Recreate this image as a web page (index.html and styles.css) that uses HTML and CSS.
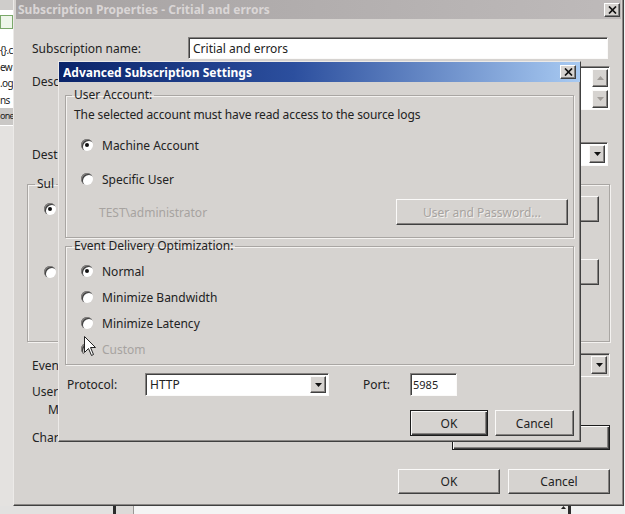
FILE: index.html
```html
<!DOCTYPE html>
<html lang="en">

<head>
    <meta charset="UTF-8">
    <title>Advanced Subscription Settings</title>
    <link rel="stylesheet" href="styles.css">
</head>

<body>
    <div class="desk">

        <!-- window peeking out on the left -->
        <div class="side">
            <div class="side-top"></div>
            <div class="side-list">
                <div class="side-icon"></div>
                <div class="side-row">{}.c</div>
                <div class="side-row">ew</div>
                <div class="side-row">.og</div>
                <div class="side-row">ns</div>
                <div class="side-row sel">one</div>
            </div>
        </div>

        <!-- Subscription Properties (behind) -->
        <div class="win back">
            <div class="cap cap-off">
                <span class="cap-t">Subscription Properties - Critial and errors</span>
                <span class="xbtn"><svg width="9" height="8" viewBox="0 0 9 8"><path d="M1 0.5 L8 7.5 M8 0.5 L1 7.5" stroke="#111" stroke-width="1.7"/></svg></span>
            </div>
            <div class="back-body">
                <div class="row row-name">
                    <span class="lbl">Subscription name:</span>
                    <div class="edit name-edit">Critial and errors</div>
                </div>
                <div class="row row-desc">
                    <span class="lbl">Desc</span>
                    <div class="edit memo">
                        <div class="vs">
                            <span class="sbtn"><svg width="7" height="4" viewBox="0 0 7 4"><path d="M3.5 0 L7 4 L0 4 Z" fill="#a09c98"/></svg></span>
                            <span class="sbtn"><svg width="7" height="4" viewBox="0 0 7 4"><path d="M0 0 L7 0 L3.5 4 Z" fill="#a09c98"/></svg></span>
                        </div>
                    </div>
                </div>
                <div class="row row-dest">
                    <span class="lbl">Dest</span>
                    <div class="edit combo dest-combo">
                        <span class="cv"></span>
                        <span class="drop"><svg width="7" height="4" viewBox="0 0 7 4"><path d="M0 0 L7 0 L3.5 4 Z" fill="#111"/></svg></span>
                    </div>
                </div>
                <fieldset class="grp sub-grp">
                    <legend>Sul</legend>
                    <div class="sub-row">
                        <span class="radio on"></span>
                        <span class="opt-t"></span>
                        <span class="btn sub-btn"></span>
                    </div>
                    <div class="sub-row second">
                        <span class="radio"></span>
                        <span class="opt-t"></span>
                        <span class="btn sub-btn"></span>
                    </div>
                </fieldset>
                <div class="row row-even">
                    <span class="lbl">Even</span>
                    <div class="edit combo off-combo">
                        <span class="cv"></span>
                        <span class="drop"><svg width="7" height="4" viewBox="0 0 7 4"><path d="M0 0 L7 0 L3.5 4 Z" fill="#111"/></svg></span>
                    </div>
                </div>
                <div class="line user-line">User</div>
                <div class="line acct-line">M</div>
                <div class="row row-chg">
                    <span>Char</span>
                    <span class="btn def chg-btn"></span>
                </div>
                <div class="foot back-foot">
                    <span class="btn">OK</span>
                    <span class="btn">Cancel</span>
                </div>
            </div>
        </div>

        <!-- Advanced Subscription Settings (front) -->
        <div class="win front">
            <div class="cap cap-on">
                <span class="cap-t">Advanced Subscription Settings</span>
                <span class="xbtn"><svg width="9" height="8" viewBox="0 0 9 8"><path d="M1 0.5 L8 7.5 M8 0.5 L1 7.5" stroke="#111" stroke-width="1.7"/></svg></span>
            </div>
            <div class="front-body">
                <fieldset class="grp acct">
                    <legend>User Account:</legend>
                    <div class="note">The selected account must have read access to the source logs</div>
                    <div class="opt first"><span class="radio on"></span>Machine Account</div>
                    <div class="opt spec"><span class="radio"></span>Specific User</div>
                    <div class="cred">
                        <span class="dim">TEST\administrator</span>
                        <span class="btn dis cred-btn">User and Password...</span>
                    </div>
                </fieldset>
                <fieldset class="grp deliv">
                    <legend>Event Delivery Optimization:</legend>
                    <div class="opt"><span class="radio on"></span>Normal</div>
                    <div class="opt"><span class="radio"></span>Minimize Bandwidth</div>
                    <div class="opt"><span class="radio"></span>Minimize Latency</div>
                    <div class="opt dim"><span class="radio dis"></span>Custom</div>
                </fieldset>
                <div class="proto">
                    <span class="proto-l">Protocol:</span>
                    <div class="edit combo proto-combo">
                        <span class="cv">HTTP</span>
                        <span class="drop"><svg width="7" height="4" viewBox="0 0 7 4"><path d="M0 0 L7 0 L3.5 4 Z" fill="#111"/></svg></span>
                    </div>
                    <span class="port-l">Port:</span>
                    <div class="edit port">5985</div>
                </div>
                <div class="foot front-foot">
                    <span class="btn def ok">OK</span>
                    <span class="btn cancel">Cancel</span>
                </div>
            </div>
        </div>

        <!-- mouse pointer -->
        <svg class="cursor" width="13" height="21" viewBox="0 0 13 21">
            <path d="M0.5 0.5 L0.5 16.5 L4.5 12.5 L7.5 19.5 L9.5 18.5 L6.5 11.5 L11.5 11.5 Z" fill="#fff" stroke="#222" stroke-width="1"/>
        </svg>

        <!-- strip below the windows -->
        <div class="strip">
            <span class="strip-l"></span>
            <span class="strip-bar"></span>
            <span class="strip-box"></span>
            <span class="strip-mid"></span>
            <span class="strip-box2"><svg width="5" height="3" viewBox="0 0 5 3"><path d="M0 3 L5 3 L2.5 0 Z" fill="#222"/></svg></span>
            <span class="strip-bar"></span>
        </div>
    </div>
</body>

</html>
```

FILE: styles.css
```css
body {
    margin: 0;
    background-color: #f2f2f2;
    font-family: "Noto Sans", "DejaVu Sans", sans-serif;
    font-size: 12px;
    color: #222;
}

.desk {
    position: relative;
    width: 625px;
    height: 514px;
    overflow: hidden;
}

/* left window */
.side {
    position: absolute;
    left: 0;
    top: 0;
    width: 13px;
    height: 506px;
    background-color: #e4e2e0;
    overflow: hidden;
}

.side-top {
    height: 10px;
    background-color: #cfcdcb;
}

.side-list {
    background-color: #fff;
    height: 116px;
    padding-top: 5px;
    box-sizing: border-box;
}

.side-icon {
    width: 11px;
    height: 12px;
    border: 1px solid #7aa86a;
    background-color: #eef6ea;
    margin-bottom: 13px;
}

.side-row {
    height: 16.5px;
    line-height: 16.5px;
    white-space: nowrap;
    font-size: 10px;
    letter-spacing: -0.6px;
}

.sel {
    background-color: #cac8c6;
    font-size: 9px;
    letter-spacing: -0.8px;
}

/* windows */
.win {
    position: absolute;
    box-sizing: border-box;
    background-color: #d6d3d0;
    border: 1px solid;
    border-color: #eceae8 #404040 #404040 #eceae8;
    box-shadow: inset -1px -1px 0 #8a8785;
}

.back {
    left: 13px;
    top: -3px;
    width: 611px;
    height: 509px;
    padding: 2px;
}

.front {
    left: 58px;
    top: 61px;
    width: 523px;
    height: 381px;
}

.cap {
    display: flex;
    align-items: center;
    font-weight: bold;
    white-space: nowrap;
}

.cap-t {
    flex: 1;
    overflow: hidden;
}

.cap-off {
    height: 19px;
    padding: 0 1px 0 2px;
    background: linear-gradient(to right, #a6a2a2, #bebaba);
    color: #dad6d6;
}

.cap-on {
    height: 20px;
    padding: 0 4px 0 4px;
    background: linear-gradient(to right, #0a246a, #2c4f9e 45%, #a8caf2);
    color: #fff;
}

.xbtn {
    width: 16px;
    height: 14px;
    box-sizing: border-box;
    display: flex;
    align-items: center;
    justify-content: center;
    background-color: #d6d3d0;
    border: 1px solid;
    border-color: #fff #404040 #404040 #fff;
    box-shadow: inset -1px -1px 0 #808080;
}

/* common controls */
.btn {
    display: flex;
    align-items: center;
    justify-content: center;
    box-sizing: border-box;
    background-color: #d6d3d0;
    border: 1px solid;
    border-color: #fbfaf9 #404040 #404040 #fbfaf9;
    box-shadow: inset -1px -1px 0 #858280;
    white-space: nowrap;
}

.btn.def {
    border-color: #1c1c1c;
    box-shadow: inset 1px 1px 0 #fbfaf9, inset -1px -1px 0 #404040, inset -2px -2px 0 #858280;
}

.btn.dis {
    color: #a7a3a0;
    text-shadow: 1px 1px 0 #f2f0ee;
}

.edit {
    box-sizing: border-box;
    background-color: #fff;
    border: 1px solid;
    border-color: #858280 #fbfaf9 #fbfaf9 #858280;
    box-shadow: inset 1px 1px 0 #404040;
    display: flex;
    align-items: center;
    padding-left: 4px;
    white-space: nowrap;
    overflow: hidden;
}

.combo {
    padding-right: 2px;
}

.cv {
    flex: 1;
    overflow: hidden;
}

.drop {
    width: 16px;
    height: calc(100% - 4px);
    box-sizing: border-box;
    display: flex;
    align-items: center;
    justify-content: center;
    background-color: #d6d3d0;
    border: 1px solid;
    border-color: #fbfaf9 #404040 #404040 #fbfaf9;
    box-shadow: inset -1px -1px 0 #858280;
}

.radio {
    position: relative;
    flex: none;
    width: 12px;
    height: 12px;
    border-radius: 50%;
    background-color: #fff;
    box-shadow: inset 1px 1px 0 #858280, inset 2px 2px 0 #404040;
}

.radio.on::after {
    content: "";
    position: absolute;
    left: 4px;
    top: 4px;
    width: 4px;
    height: 4px;
    border-radius: 50%;
    background-color: #111;
}

.radio.dis {
    background-color: #d6d3d0;
}

.dim {
    color: #a7a3a0;
}

.grp {
    margin: 0;
    padding: 0;
    min-width: 0;
    border: 1px solid #a9a6a3;
    box-shadow: 1px 1px 0 #f4f2f0, inset 1px 1px 0 #f4f2f0;
}

.grp legend {
    line-height: 16px;
    padding: 0 2px;
    white-space: nowrap;
}

.row {
    display: flex;
    align-items: center;
    white-space: nowrap;
}

.line {
    line-height: 16px;
    white-space: nowrap;
}

.foot {
    display: flex;
    justify-content: flex-end;
}

/* back window layout */
.back-body {
    padding: 18px 11px 0 16px;
}

.lbl {
    width: 156px;
    flex: none;
}

.row-name {
    height: 22px;
}

.name-edit {
    flex: 1;
    height: 22px;
    margin-right: 2px;
}

.row-desc {
    margin-top: 7px;
    height: 44px;
    align-items: flex-start;
}

.row-desc .lbl {
    padding-top: 7px;
}

.memo {
    flex: 1;
    height: 44px;
    justify-content: flex-end;
    align-items: flex-start;
    padding: 2px 1px 0 0;
}

.vs {
    display: flex;
    flex-direction: column;
    gap: 3px;
}

.sbtn {
    width: 16px;
    height: 18px;
    box-sizing: border-box;
    display: flex;
    align-items: center;
    justify-content: center;
    background-color: #d6d3d0;
    border: 1px solid;
    border-color: #fbfaf9 #404040 #404040 #fbfaf9;
    box-shadow: inset -1px -1px 0 #858280;
}

.row-dest {
    margin-top: 32px;
    height: 24px;
}

.dest-combo {
    flex: 1;
    height: 24px;
    margin-right: 2px;
}

.sub-grp {
    margin: 10px 0 0 -5px;
    padding: 0 10px 56px 16px;
}

.sub-grp legend {
    margin-left: -9px;
}

.sub-row {
    display: flex;
    align-items: center;
    height: 26px;
    margin-top: 4px;
}

.sub-row.second {
    margin-top: 37px;
}

.opt-t {
    flex: 1;
    margin-left: 9px;
}

.sub-btn {
    width: 160px;
    height: 26px;
}

.row-even {
    margin-top: 11px;
    height: 24px;
}

.off-combo {
    flex: 1;
    height: 24px;
    background-color: #d6d3d0;
}

.user-line {
    margin-top: 7px;
}

.acct-line {
    margin-top: 2px;
    padding-left: 16px;
}

.row-chg {
    margin-top: 7px;
    height: 25px;
}

.chg-btn {
    margin-left: auto;
    width: 158px;
    height: 25px;
}

.back-foot {
    margin-top: 19px;
    gap: 8px;
}

.back-foot .btn {
    width: 102px;
    height: 25px;
}

/* front dialog layout */
.front-body {
    padding: 5px 6px 0 6px;
}

.acct,
.deliv {
    padding-left: 8px;
    padding-right: 5px;
}

.grp.acct legend,
.grp.deliv legend {
    margin-left: -2px;
}

.acct {
    padding-bottom: 12px;
}

.note {
    margin-top: 4px;
    line-height: 16px;
    white-space: nowrap;
    letter-spacing: -0.1px;
}

.opt {
    display: flex;
    align-items: center;
    gap: 9px;
    height: 16px;
    padding-left: 7px;
    margin-top: 10px;
}

.opt.first {
    margin-top: 14px;
}

.opt.spec {
    margin-top: 18px;
}

.deliv .opt:first-of-type {
    margin-top: 9px;
}

.deliv {
    padding-bottom: 7px;
}

.cred {
    display: flex;
    align-items: center;
    height: 26px;
    margin-top: 12px;
    padding-left: 25px;
}

.cred .dim {
    flex: 1;
}

.cred-btn {
    width: 172px;
    height: 26px;
}

.proto {
    display: flex;
    align-items: center;
    margin-top: 8px;
    height: 23px;
}

.proto-l {
    width: 78px;
    margin-left: 2px;
}

.proto-combo {
    width: 184px;
    height: 23px;
}

.port-l {
    width: 47px;
    margin-left: 34px;
}

.port {
    width: 47px;
    height: 23px;
    padding-left: 2px;
    font-size: 11px;
}

.front-foot {
    margin-top: 14px;
    gap: 7px;
}

.ok {
    width: 78px;
    height: 26px;
}

.cancel {
    width: 79px;
    height: 26px;
}

.cursor {
    position: absolute;
    left: 84px;
    top: 336px;
}

/* strip under the windows */
.strip {
    position: absolute;
    left: 0;
    top: 506px;
    width: 625px;
    height: 8px;
    display: flex;
}

.strip-l {
    width: 113px;
    background-color: #e2e1e0;
}

.strip-bar {
    width: 3px;
    background-color: #2c2c2c;
}

.strip-box {
    width: 17px;
    background-color: #dcdad8;
    border-right: 1px solid #9a9795;
}

.strip-mid {
    width: 366px;
    background-color: #f4f4f4;
}

.strip-box2 {
    width: 68px;
    display: flex;
    justify-content: flex-end;
    align-items: flex-start;
    padding-right: 2px;
    box-sizing: border-box;
    background-color: #eceae8;
}
```
